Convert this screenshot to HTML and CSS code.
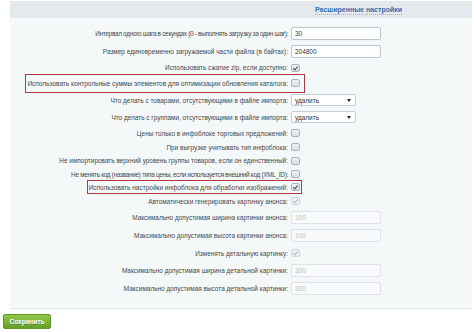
FILE: index.html
```html
<!DOCTYPE html>
<html lang="ru">
<head>
<meta charset="utf-8">
<link rel="stylesheet" href="styles.css">
</head>
<body>
<div class="panel">
  <div class="heading"><span class="heading-link">Расширенные настройки</span></div>
  <div class="form">
    <div class="lbl"><span class="t tight-lg">Интервал одного шага в секундах (0 - выполнять загрузку за один шаг):</span></div>
    <div class="ctl"><span class="inp">30</span></div>

    <div class="lbl"><span class="t">Размер единовременно загружаемой части файла (в байтах):</span></div>
    <div class="ctl"><span class="inp">204800</span></div>

    <div class="lbl"><span class="t">Использовать сжатие zip, если доступно:</span></div>
    <div class="ctl"><span class="cb checked"></span></div>

    <div class="lbl"><span class="t hl-l hl-a">Использовать контрольные суммы элементов для оптимизации обновления каталога:</span></div>
    <div class="ctl"><span class="hl-r hl-a pad-a"><span class="cb"></span></span></div>

    <div class="lbl"><span class="t">Что делать с товарами, отсутствующими в файле импорта:</span></div>
    <div class="ctl"><span class="sel">удалить<span class="arrow"></span></span></div>

    <div class="lbl"><span class="t">Что делать с группами, отсутствующими в файле импорта:</span></div>
    <div class="ctl"><span class="sel">удалить<span class="arrow"></span></span></div>

    <div class="lbl"><span class="t">Цены только в инфоблоке торговых предложений:</span></div>
    <div class="ctl"><span class="cb"></span></div>

    <div class="lbl"><span class="t">При выгрузке учитывать тип инфоблока:</span></div>
    <div class="ctl"><span class="cb"></span></div>

    <div class="lbl"><span class="t">Не импортировать верхний уровень группы товаров, если он единственный:</span></div>
    <div class="ctl"><span class="cb"></span></div>

    <div class="lbl"><span class="t tight-lg">Не менять код (название) типа цены, если используется внешний код (XML_ID):</span></div>
    <div class="ctl"><span class="cb"></span></div>

    <div class="lbl"><span class="t hl-l hl-b">Использовать настройки инфоблока для обработки изображений:</span></div>
    <div class="ctl"><span class="hl-r hl-b pad-b"><span class="cb checked"></span></span></div>

    <div class="lbl"><span class="t">Автоматически генерировать картинку анонса:</span></div>
    <div class="ctl"><span class="cb checked disabled"></span></div>

    <div class="lbl"><span class="t">Максимально допустимая ширина картинки анонса:</span></div>
    <div class="ctl"><span class="inp disabled">100</span></div>

    <div class="lbl"><span class="t">Максимально допустимая высота картинки анонса:</span></div>
    <div class="ctl"><span class="inp disabled">100</span></div>

    <div class="lbl"><span class="t">Изменять детальную картинку:</span></div>
    <div class="ctl"><span class="cb checked disabled"></span></div>

    <div class="lbl"><span class="t">Максимально допустимая ширина детальной картинки:</span></div>
    <div class="ctl"><span class="inp disabled">300</span></div>

    <div class="lbl"><span class="t">Максимально допустимая высота детальной картинки:</span></div>
    <div class="ctl"><span class="inp disabled">300</span></div>
  </div>
</div>
<div class="buttons"><button class="save">Сохранить</button></div>
</body>
</html>
```
FILE: styles.css
```css
html, body {
  margin: 0;
  padding: 0;
  background: #ffffff;
}
body {
  font-family: "Liberation Sans", Arial, sans-serif;
  font-size: 6.45px;
  color: #42484b;
}
.panel {
  margin: 1px 2px 0 10px;
  background: #f5f8f9;
  border-bottom: 1px solid #dfe5e8;
  padding-bottom: 10px;
}
.heading {
  height: 17px;
  background: #e3e9ec;
  display: flex;
  align-items: center;
  padding-left: 305px;
}
.heading-link {
  color: #2f6db5;
  font-weight: bold;
  font-size: 7px;
  border-bottom: 1px dotted #8fb0d6;
  line-height: 8px;
  margin-top: 1px;
}
.form {
  display: grid;
  grid-template-columns: 281px 1fr;
  grid-template-rows: 19px 17.75px 15px 16.25px 17.5px 16.5px 15px 13.5px 13.5px 13px 13.25px 14.75px 18.25px 18.25px 16.5px 17.75px 18.75px;
  padding-top: 5.5px;
}
.lbl {
  display: flex;
  justify-content: flex-end;
  align-items: center;
}
.ctl {
  display: flex;
  align-items: center;
}
.t {
  padding-right: 3px;
  white-space: nowrap;
}
.tight-lg {
  letter-spacing: -0.31px;
}
.hl-l {
  display: flex;
  align-items: center;
  padding-left: 1px;
  border: 1px solid #b4363f;
  border-right: none;
}
.hl-r {
  display: flex;
  align-items: center;
  border: 1px solid #b4363f;
  border-left: none;
}
.hl-a { height: 17px; font-size: 6.5px; }
.hl-b { height: 12px; font-size: 6.5px; }
.pad-a { padding-right: 4px; }
.pad-b { padding-right: 1px; }
.inp {
  box-sizing: border-box;
  width: 90px;
  height: 13px;
  background: #ffffff;
  border: 1px solid #bcc6cc;
  border-radius: 2px;
  padding-left: 3px;
  display: flex;
  align-items: center;
  color: #333;
}
.inp.disabled {
  background: #f8fafb;
  border-color: #dde3e6;
  color: #b9c0c4;
}
.sel {
  box-sizing: border-box;
  width: 65px;
  height: 12px;
  background: #ffffff;
  border: 1px solid #c5ced3;
  border-radius: 2px;
  padding-left: 3px;
  display: flex;
  align-items: center;
  position: relative;
  color: #333;
}
.arrow {
  position: absolute;
  right: 4px;
  top: 4px;
  width: 0;
  height: 0;
  border-left: 2px solid transparent;
  border-right: 2px solid transparent;
  border-top: 3px solid #222;
}
.cb {
  box-sizing: border-box;
  width: 9px;
  height: 8px;
  border: 1px solid #aab5bb;
  border-radius: 2px;
  background: linear-gradient(#f0f3f4, #d6dde0);
  position: relative;
}
.cb.checked::after {
  content: "";
  position: absolute;
  left: 2px;
  top: 0px;
  width: 2px;
  height: 4px;
  border-right: 1px solid #4b5459;
  border-bottom: 1px solid #4b5459;
  transform: rotate(40deg);
}
.cb.disabled {
  border-color: #d3dadd;
  background: #eef1f2;
}
.cb.disabled::after {
  border-color: #b4bcc0;
}
.buttons {
  padding: 5px 0 0 3px;
}
.save {
  width: 48px;
  height: 15px;
  padding: 0;
  border: 1px solid #5e961f;
  border-radius: 2px;
  background: linear-gradient(#92c84a, #65a025);
  color: #ffffff;
  font-family: "Liberation Sans", Arial, sans-serif;
  font-size: 6.5px;
  font-weight: bold;
  text-shadow: 0 1px 0 rgba(0,0,0,0.25);
}
```
